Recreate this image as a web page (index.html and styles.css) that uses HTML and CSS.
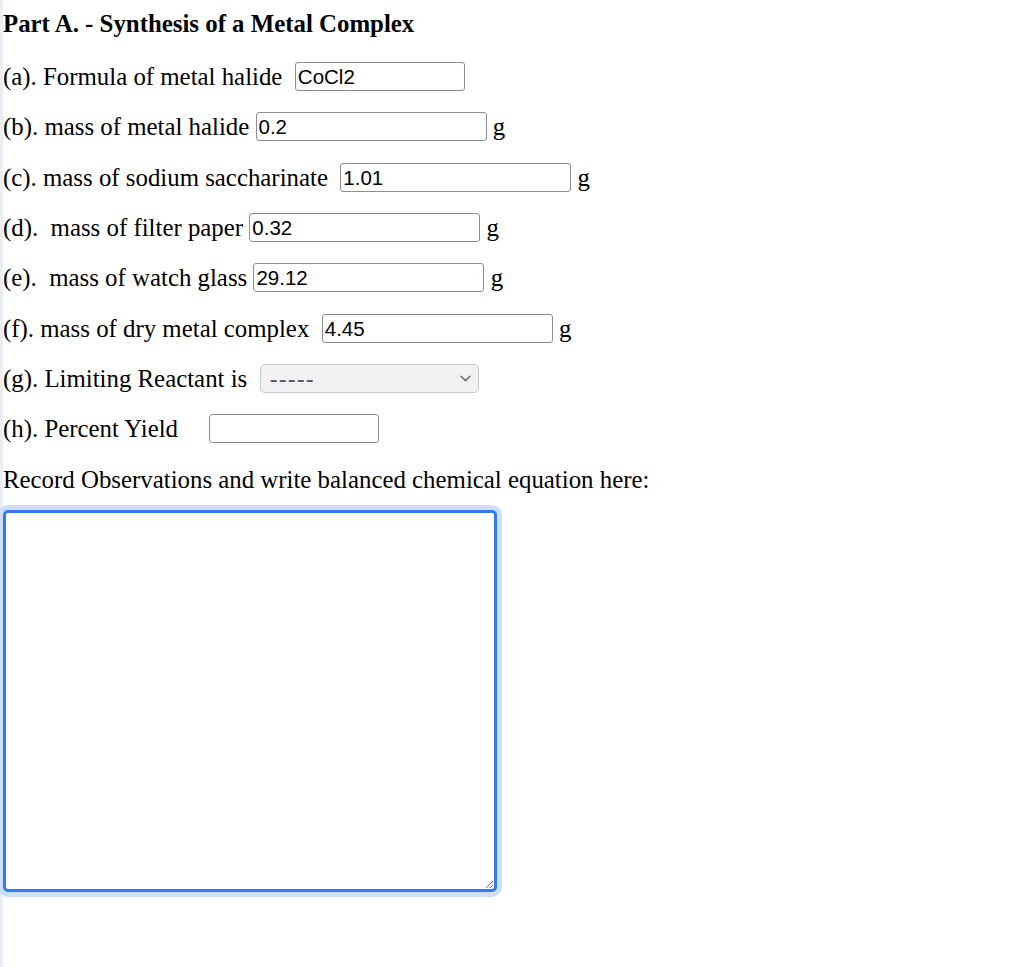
FILE: index.html
```html
<!DOCTYPE html>
<html lang="en">
<head>
<meta charset="utf-8">
<title>Part A. - Synthesis of a Metal Complex</title>
<link rel="stylesheet" href="styles.css">
</head>
<body>
<div class="sheet">
  <h1 class="title">Part A. - Synthesis of a Metal Complex</h1>
  <div class="row"><span class="lbl">(a). Formula of metal halide  </span><input class="field w170" type="text" value="CoCl2"></div>
  <div class="row"><span class="lbl">(b). mass of metal halide </span><input class="field w231" type="text" value="0.2"><span class="unit"> g</span></div>
  <div class="row"><span class="lbl">(c). mass of sodium saccharinate  </span><input class="field w231" type="text" value="1.01"><span class="unit"> g</span></div>
  <div class="row"><span class="lbl">(d).  mass of filter paper </span><input class="field w231" type="text" value="0.32"><span class="unit"> g</span></div>
  <div class="row"><span class="lbl">(e).  mass of watch glass </span><input class="field w231" type="text" value="29.12"><span class="unit"> g</span></div>
  <div class="row"><span class="lbl">(f). mass of dry metal complex  </span><input class="field w231" type="text" value="4.45"><span class="unit"> g</span></div>
  <div class="row"><span class="lbl">(g). Limiting Reactant is  </span><span class="pick"><select class="choice"><option>-----</option></select><svg class="chev" width="11" height="7" viewBox="0 0 11 7"><path d="M1 1.2 L5.5 5.6 L10 1.2" fill="none" stroke="#6e6e73" stroke-width="1.5" stroke-linecap="round" stroke-linejoin="round"/></svg></span></div>
  <div class="row"><span class="lbl">(h). Percent Yield     </span><input class="field w170" type="text" value=""></div>
  <p class="note">Record Observations and write balanced chemical equation here:</p>
  <textarea class="obs"></textarea>
</div>
</body>
</html>
```

FILE: styles.css
```css
html, body {
  margin: 0;
  padding: 0;
  background: #ffffff;
}

.sheet {
  box-sizing: border-box;
  min-height: 967px;
  border-left: 3px solid #e9eef2;
  padding-top: 9px;
  font-family: "Liberation Serif", "Times New Roman", serif;
  font-size: 24.85px;
  color: #000000;
}

.title {
  font-size: 24.85px;
  font-weight: bold;
  line-height: 29px;
  margin: 0 0 24px;
}

.row {
  display: flex;
  align-items: center;
  height: 29px;
  margin-bottom: 21.33px;
}

.lbl,
.unit {
  white-space: pre;
  line-height: 29px;
}

.field {
  box-sizing: border-box;
  height: 29px;
  margin: 0;
  padding: 1px 2px 0;
  border: 1px solid #8e8e93;
  border-radius: 3px;
  background: #ffffff;
  color: #000000;
  font-family: "Liberation Sans", Arial, sans-serif;
  font-size: 20.5px;
}

.w170 {
  width: 170px;
}

.w231 {
  width: 231px;
}

.pick {
  position: relative;
  display: inline-flex;
}

.choice {
  -webkit-appearance: none;
  appearance: none;
  box-sizing: border-box;
  width: 219px;
  height: 29px;
  margin: 0;
  padding: 0 9px;
  border: 1px solid #c8c8cc;
  border-radius: 5px;
  background: #f2f2f4;
  color: #5a5a5e;
  font-family: "Liberation Sans", Arial, sans-serif;
  font-size: 24px;
  letter-spacing: 1px;
}

.chev {
  position: absolute;
  right: 8px;
  top: 11px;
  pointer-events: none;
}

.note {
  margin: 0 0 16.33px;
  line-height: 29px;
}

.obs {
  display: block;
  box-sizing: border-box;
  width: 494px;
  height: 382px;
  margin: 0;
  border: 3px solid #3478f6;
  border-radius: 5px;
  box-shadow: 0 0 0 5px #cbdffa;
  outline: none;
  background: #ffffff;
  resize: both;
}
```
